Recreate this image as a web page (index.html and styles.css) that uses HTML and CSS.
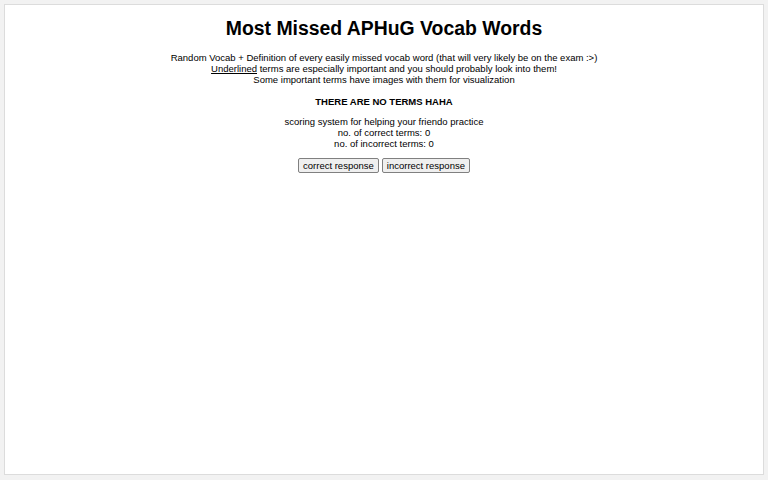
FILE: index.html
```html
<!DOCTYPE html>
<html lang="en">
<head>
  <meta charset="UTF-8">
  <title>Most Missed APHuG Vocab Words</title>
  <link rel="stylesheet" href="styles.css">
</head>
<body>
<div class="page">
  <h1>Most Missed APHuG Vocab Words</h1>
  <p class="intro">
    Random Vocab + Definition of every easily missed vocab word (that will very likely be on the exam :&gt;)<br>
    <u>Underlined</u> terms are especially important and you should probably look into them!<br>
    Some important terms have images with them for visualization
  </p>
  <!--词汇区-->
  <p class="term" id="term">THERE ARE NO TERMS HAHA</p>
  <p class="score">
    scoring system for helping your friendo practice<br>
    no. of correct terms: <span id="right">0</span><br>
    no. of incorrect terms: <span id="wrong">0</span>
  </p>
  <div class="btns">
    <button id="btnRight">correct response</button>
    <button id="btnWrong">incorrect response</button>
  </div>
</div>
<script>
  var right = 0, wrong = 0;
  document.getElementById("btnRight").onclick = function(){
      right++;
      document.getElementById("right").innerText = right;
  };
  document.getElementById("btnWrong").onclick = function(){
      wrong++;
      document.getElementById("wrong").innerText = wrong;
  };
</script>
</body>
</html>
```

FILE: styles.css
```css
* {
  padding: 0;
  margin: 0;
  border: 0;
}

html, body {
  height: 100%;
}

body {
  background: #f2f2f2;
  padding: 4px 4px 5px 4px;
  box-sizing: border-box;
  font-family: "Liberation Sans", Arial, sans-serif;
  color: #000;
}

.page {
  height: 100%;
  box-sizing: border-box;
  background: #fff;
  border: 1px solid #dcdcdc;
  text-align: center;
  padding-top: 11px;
}

h1 {
  font-size: 19.4px;
  line-height: 24px;
  margin-bottom: 11.5px;
}

p {
  font-size: 9.5px;
  line-height: 11px;
}

.intro {
  margin-bottom: 11px;
}

.term {
  font-weight: bold;
  margin-bottom: 9px;
}

.score {
  margin-bottom: 9.5px;
}

.btns {
  display: flex;
  justify-content: center;
  gap: 3px;
}

.btns button {
  font-family: "Liberation Sans", Arial, sans-serif;
  font-size: 9.5px;
  height: 15px;
  padding: 0 4px;
  background: #efefef;
  border: 1px solid #808080;
  border-radius: 2px;
  color: #000;
}
```
